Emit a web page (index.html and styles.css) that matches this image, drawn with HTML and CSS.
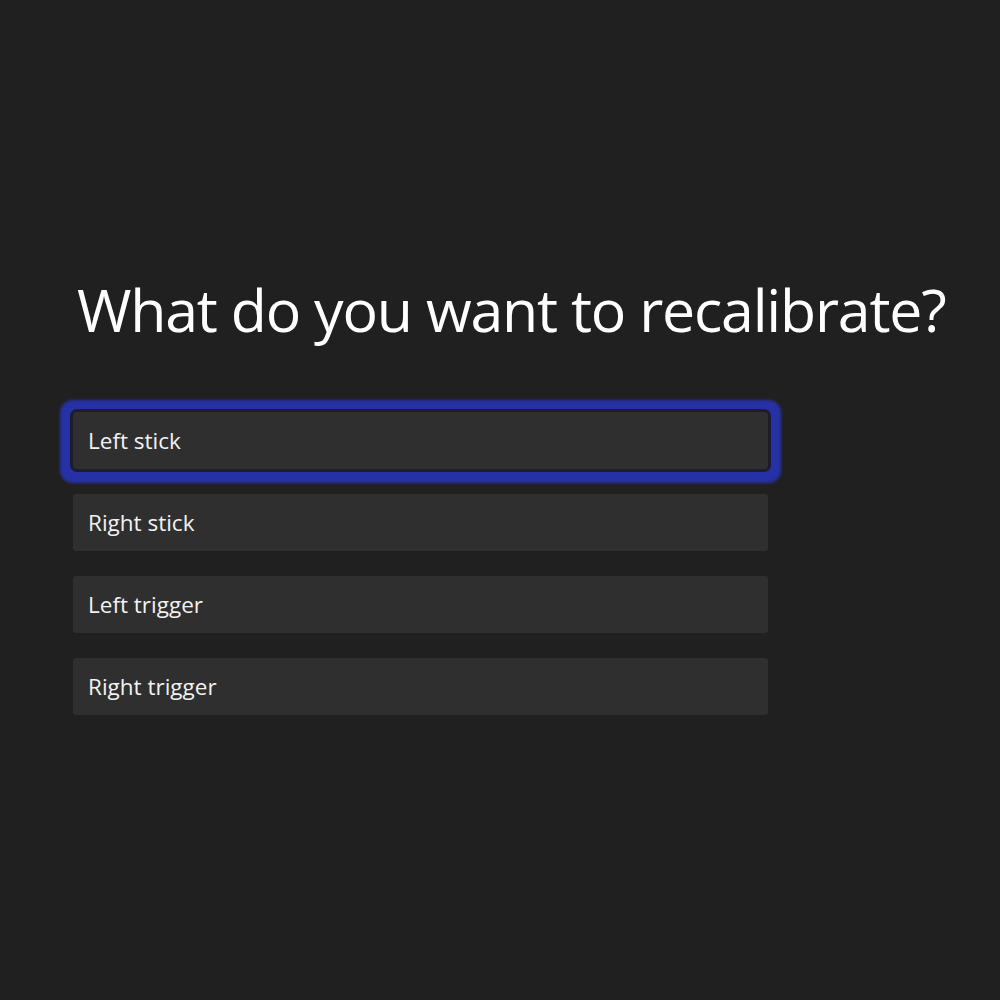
FILE: index.html
```html
<!DOCTYPE html>
<html lang="en">
<head>
    <meta charset="UTF-8">
    <title>Recalibrate</title>
    <link rel="stylesheet" href="styles.css">
</head>
<body>
    <div class="page">
        <h1 class="title">What do you want to recalibrate?</h1>
        <div class="options">
            <button class="option focused">Left stick</button>
            <button class="option">Right stick</button>
            <button class="option">Left trigger</button>
            <button class="option">Right trigger</button>
        </div>
    </div>
</body>
</html>
```

FILE: styles.css
```css
body {
    margin: 0;
    background: #202020;
    color: #ffffff;
    font-family: "Open Sans", "Noto Sans", sans-serif;
}
.page {
    padding: 264px 0 0 73px;
}
.title {
    margin: 0 0 58px 4px;
    font-size: 59px;
    font-weight: 400;
    line-height: 90px;
    letter-spacing: -1.2px;
}
.options {
    display: flex;
    flex-direction: column;
    gap: 25px;
    width: 695px;
}
.option {
    height: 57px;
    padding: 0 15px;
    border: none;
    border-radius: 3px;
    background: #2f2f2f;
    color: #f2f2f2;
    font-family: inherit;
    font-size: 22.5px;
    text-align: left;
}
.option.focused {
    box-shadow: 0 0 0 3px #1c1c2e, 0 1px 3px 13px #2731a6;
    border-radius: 4px;
}
```
